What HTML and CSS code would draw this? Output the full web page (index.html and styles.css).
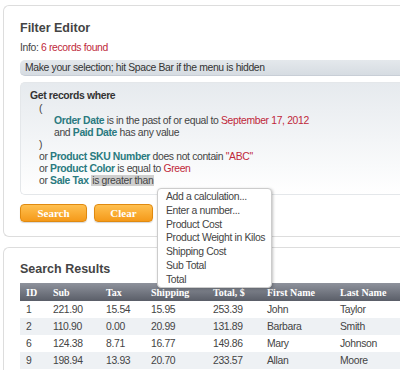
FILE: index.html
```html
<!DOCTYPE html>
<html lang="en">
<head>
    <meta charset="UTF-8">
    <title>Filter Editor</title>
    <link rel="stylesheet" href="styles.css">
</head>
<body>
    <div class="panel editor">
        <h2>Filter Editor</h2>
        <p class="info">Info: <span class="red">6 records found</span></p>
        <div class="hint">Make your selection; hit Space Bar if the menu is hidden</div>
        <div class="query">
            <div class="head">Get records where</div>
            <div class="l1">(</div>
            <div class="l2"><b>Order Date</b> is in the past of or equal to <span class="red">September 17, 2012</span></div>
            <div class="l2">and <b>Paid Date</b> has any value</div>
            <div class="l1">)</div>
            <div class="l1">or <b>Product SKU Number</b> does not contain <span class="red">"ABC"</span></div>
            <div class="l1">or <b>Product Color</b> is equal to <span class="red">Green</span></div>
            <div class="l1">or <b>Sale Tax</b> <span class="sel">is greater than</span></div>
        </div>
        <div class="buttons">
            <button class="btn search">Search</button>
            <button class="btn clear">Clear</button>
        </div>
    </div>

    <div class="panel results">
        <h2>Search Results</h2>
        <table>
            <tr>
                <th class="c-id">ID</th>
                <th class="c-sub">Sub</th>
                <th class="c-tax">Tax</th>
                <th class="c-ship">Shipping</th>
                <th class="c-total">Total, $</th>
                <th class="c-first">First Name</th>
                <th class="c-last">Last Name</th>
            </tr>
            <tr><td>1</td><td>221.90</td><td>15.54</td><td>15.95</td><td>253.39</td><td>John</td><td>Taylor</td></tr>
            <tr class="alt"><td>2</td><td>110.90</td><td>0.00</td><td>20.99</td><td>131.89</td><td>Barbara</td><td>Smith</td></tr>
            <tr><td>6</td><td>124.38</td><td>8.71</td><td>16.77</td><td>149.86</td><td>Mary</td><td>Johnson</td></tr>
            <tr class="alt"><td>9</td><td>198.94</td><td>13.93</td><td>20.70</td><td>233.57</td><td>Allan</td><td>Moore</td></tr>
        </table>
    </div>

    <ul class="menu">
        <li>Add a calculation...</li>
        <li>Enter a number...</li>
        <li>Product Cost</li>
        <li>Product Weight in Kilos</li>
        <li>Shipping Cost</li>
        <li>Sub Total</li>
        <li>Total</li>
    </ul>
</body>
</html>
```

FILE: styles.css
```css
body {
    margin: 0;
    padding: 5px 0 0 3px;
    background-color: #FFFFFF;
    color: #444444;
    font-family: "Liberation Sans", Arial, sans-serif;
    font-size: 10.4px;
    letter-spacing: -0.35px;
    position: relative;
    overflow: hidden;
    height: 365px;
}

.red {
    color: #C0283A;
}

.panel {
    box-sizing: border-box;
    border: 1px solid #DDDDDD;
    border-right: none;
    border-radius: 6px 0 0 6px;
    padding: 0 0 0 16px;
}

.panel h2 {
    margin: 0;
    font-size: 12.5px;
    line-height: 15px;
    font-weight: bold;
    color: #444444;
    letter-spacing: 0;
}

.editor {
    height: 232px;
    padding-top: 15px;
}

.info {
    margin: 5px 0 0 0;
    line-height: 14px;
}

.hint {
    margin-top: 5px;
    height: 15px;
    line-height: 15px;
    padding-left: 5px;
    border-radius: 5px 0 0 5px;
    background: linear-gradient(#E4E8EC, #D6DCE2);
    border-bottom: 1px solid #C8CED6;
    color: #333333;
}

.query {
    margin-top: 6px;
    height: 113px;
    box-sizing: border-box;
    padding: 7px 0 0 9px;
    border: 1px solid #E4E7EA;
    border-right: none;
    border-radius: 5px 0 0 5px;
    background: linear-gradient(#E6EAEE, #FFFFFF);
    line-height: 12px;
}

.query .head {
    font-weight: bold;
    color: #333333;
    margin-bottom: 1px;
}

.query b {
    color: #2A7A80;
}

.l1 {
    padding-left: 9px;
}

.l2 {
    padding-left: 24px;
}

.sel {
    background-color: #CFCFCF;
    padding: 0 1px;
}

.buttons {
    margin-top: 9px;
    display: flex;
    gap: 7px;
}

.btn {
    height: 18px;
    border: 1px solid #E08A10;
    border-radius: 4px;
    background: linear-gradient(#FFC050, #F59A1A);
    color: #FFFFFF;
    font-family: "Liberation Serif", "Times New Roman", serif;
    font-weight: bold;
    font-size: 11px;
    padding: 0;
    box-shadow: 0 1px 1px #D8D8D8;
}

.search {
    width: 67px;
}

.clear {
    width: 59px;
}

.results {
    margin-top: 10px;
    padding-top: 14px;
    height: 130px;
}

.results h2 {
    margin-bottom: 6px;
}

table {
    width: 100%;
    border-collapse: collapse;
    table-layout: fixed;
}

th,
td {
    box-sizing: border-box;
    white-space: nowrap;
    text-align: left;
    padding: 0 0 0 6px;
}

th {
    height: 18px;
    background: linear-gradient(#8E929C, #5A5E68);
    color: #FFFFFF;
    font-family: "Liberation Serif", "Times New Roman", serif;
    font-size: 10px;
    letter-spacing: 0;
}

td {
    height: 17px;
    color: #444444;
}

tr.alt td {
    background-color: #EEF1F4;
}

.c-id { width: 27px; }
.c-sub { width: 53px; }
.c-tax { width: 45px; }
.c-ship { width: 62px; }
.c-total { width: 54px; }
.c-first { width: 73px; }

.menu {
    position: absolute;
    left: 157px;
    top: 188px;
    width: 105px;
    margin: 0;
    padding: 1px 0 0 8px;
    list-style: none;
    background-color: #FFFFFF;
    border: 1px solid #CCCCCC;
    border-radius: 4px;
    box-shadow: 1px 1px 3px rgba(0, 0, 0, 0.25);
    line-height: 13.8px;
    color: #444444;
}
```
